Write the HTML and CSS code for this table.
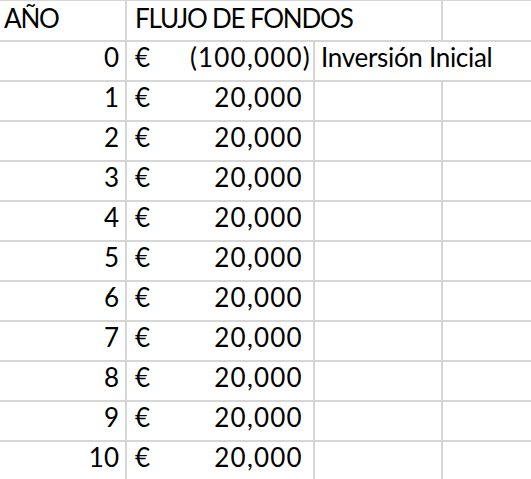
FILE: index.html
```html
<!DOCTYPE html>
<html lang="es">
<head>
<meta charset="utf-8">
<title>Flujo de fondos</title>
<link rel="stylesheet" href="styles.css">
</head>
<body>
<div class="sheet">
  <div class="cell head year">AÑO</div>
  <div class="cell head col-b span2">FLUJO DE FONDOS</div>
  <div class="cell head col-d"></div>

  <div class="cell year num">0</div>
  <div class="cell col-b money"><span class="cur">€</span><span class="amt">(100,000)</span></div>
  <div class="cell col-c span2 note">Inversión Inicial</div>

  <div class="cell year num">1</div>
  <div class="cell col-b money"><span class="cur">€</span><span class="amt">20,000<span class="pad">)</span></span></div>
  <div class="cell col-c"></div>
  <div class="cell col-d"></div>

  <div class="cell year num">2</div>
  <div class="cell col-b money"><span class="cur">€</span><span class="amt">20,000<span class="pad">)</span></span></div>
  <div class="cell col-c"></div>
  <div class="cell col-d"></div>

  <div class="cell year num">3</div>
  <div class="cell col-b money"><span class="cur">€</span><span class="amt">20,000<span class="pad">)</span></span></div>
  <div class="cell col-c"></div>
  <div class="cell col-d"></div>

  <div class="cell year num">4</div>
  <div class="cell col-b money"><span class="cur">€</span><span class="amt">20,000<span class="pad">)</span></span></div>
  <div class="cell col-c"></div>
  <div class="cell col-d"></div>

  <div class="cell year num">5</div>
  <div class="cell col-b money"><span class="cur">€</span><span class="amt">20,000<span class="pad">)</span></span></div>
  <div class="cell col-c"></div>
  <div class="cell col-d"></div>

  <div class="cell year num">6</div>
  <div class="cell col-b money"><span class="cur">€</span><span class="amt">20,000<span class="pad">)</span></span></div>
  <div class="cell col-c"></div>
  <div class="cell col-d"></div>

  <div class="cell year num">7</div>
  <div class="cell col-b money"><span class="cur">€</span><span class="amt">20,000<span class="pad">)</span></span></div>
  <div class="cell col-c"></div>
  <div class="cell col-d"></div>

  <div class="cell year num">8</div>
  <div class="cell col-b money"><span class="cur">€</span><span class="amt">20,000<span class="pad">)</span></span></div>
  <div class="cell col-c"></div>
  <div class="cell col-d"></div>

  <div class="cell year num">9</div>
  <div class="cell col-b money"><span class="cur">€</span><span class="amt">20,000<span class="pad">)</span></span></div>
  <div class="cell col-c"></div>
  <div class="cell col-d"></div>

  <div class="cell year num">10</div>
  <div class="cell col-b money"><span class="cur">€</span><span class="amt">20,000<span class="pad">)</span></span></div>
  <div class="cell col-c"></div>
  <div class="cell col-d"></div>
</div>
</body>
</html>
```
FILE: styles.css
```css
html, body {
  margin: 0;
  padding: 0;
  background: #ffffff;
}

.sheet {
  display: grid;
  grid-template-columns: 125px 188px 128px 1fr;
  grid-auto-rows: 40px;
  width: 531px;
  height: 479px;
  overflow: hidden;
  font-family: "Lato", "Open Sans", sans-serif;
  font-size: 26px;
  line-height: 30px;
  color: #000000;
}

.cell {
  box-sizing: border-box;
  border-top: 2px solid #d6d6d6;
  white-space: nowrap;
  overflow: hidden;
}

.head {
  border-top-width: 1px;
  padding-top: 2px;
  letter-spacing: -1.2px;
}

.col-b,
.col-c,
.col-d {
  border-left: 2px solid #d6d6d6;
}

.span2 {
  grid-column: span 2;
}

.year {
  padding-left: 4px;
}

.num {
  text-align: right;
  padding-right: 6px;
}

.col-b {
  padding-left: 8px;
}

.money {
  display: flex;
  justify-content: space-between;
  padding-right: 2px;
}

.amt {
  letter-spacing: 1.2px;
}

.pad {
  visibility: hidden;
}

.note {
  padding-left: 6px;
  letter-spacing: -0.3px;
}
```
